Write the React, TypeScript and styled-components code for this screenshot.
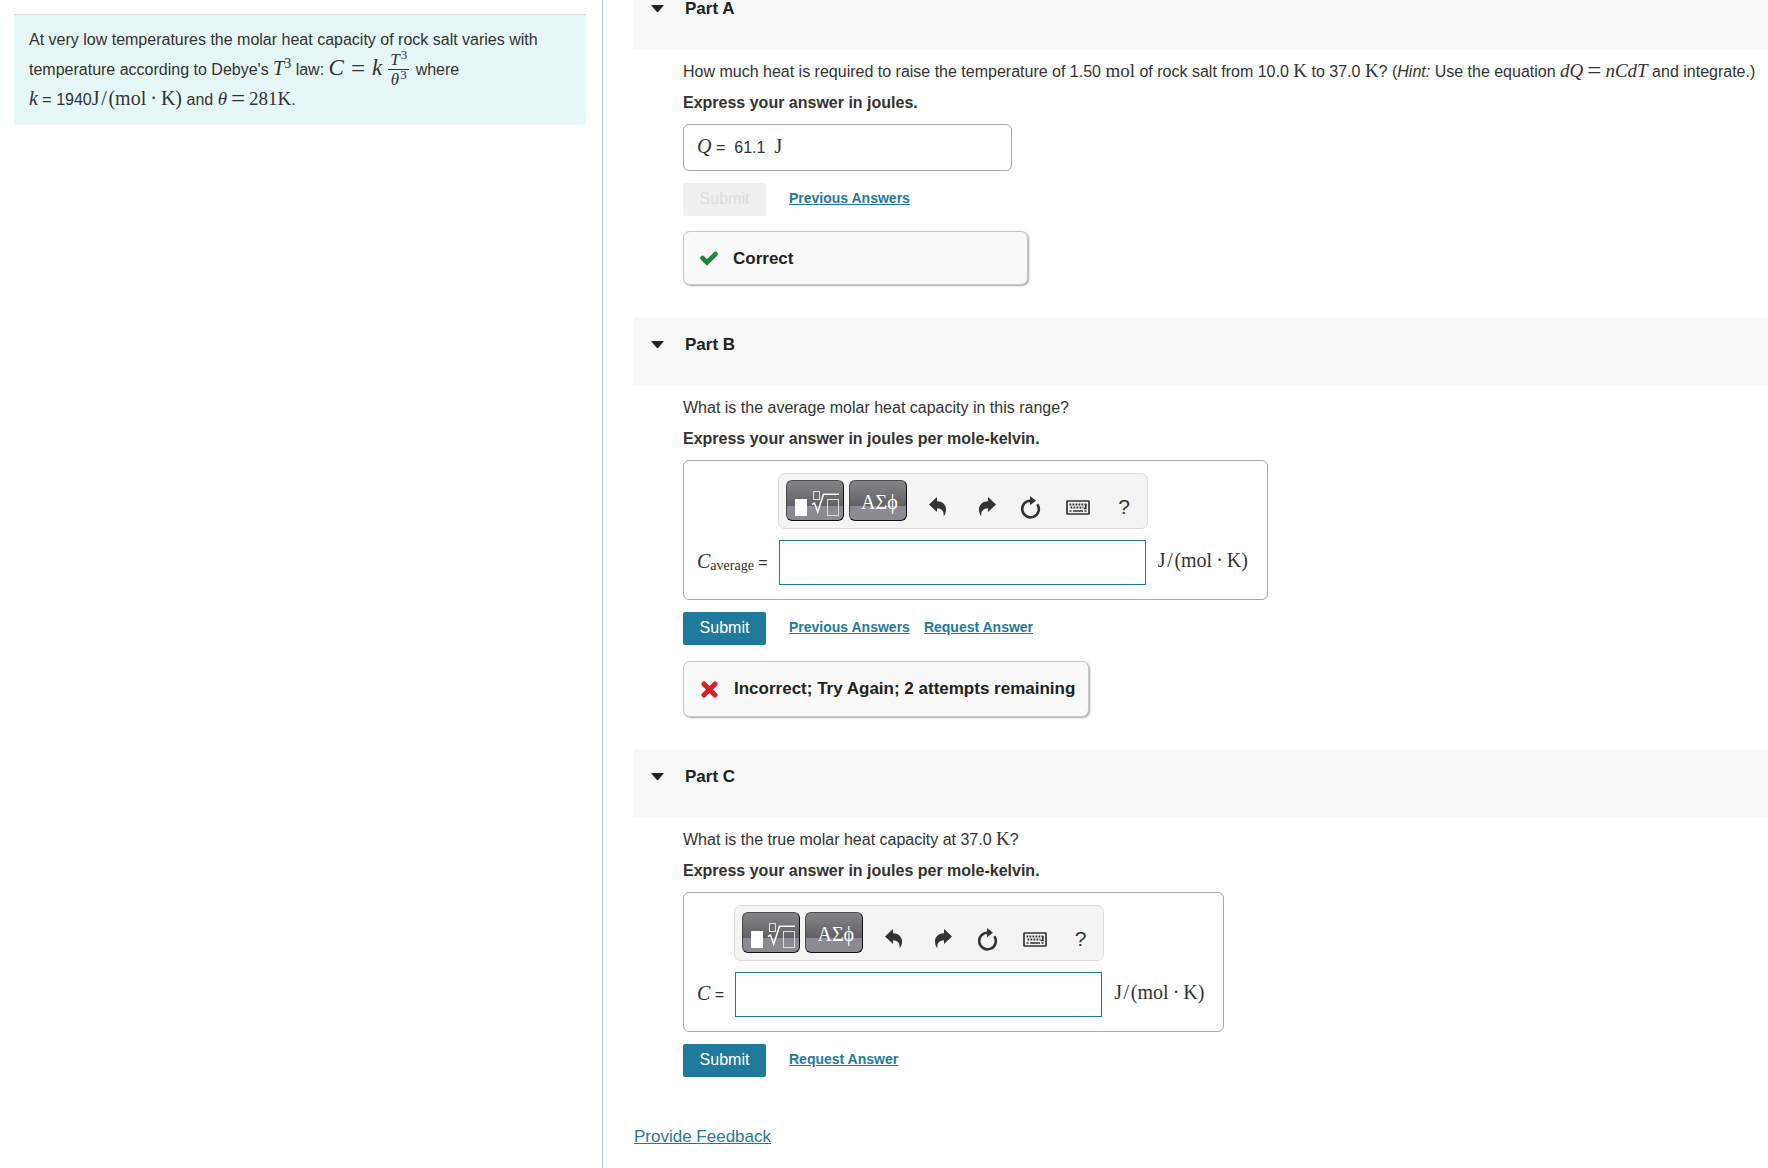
import type { ReactNode } from "react";
import styled, { createGlobalStyle } from "styled-components";

const sans = '"Liberation Sans", Arial, Helvetica, sans-serif';
const serif = '"Liberation Serif", "Times New Roman", serif';

const GlobalStyle = createGlobalStyle`
  *, *::before, *::after { box-sizing: border-box; }
  body {
    margin: 0;
    background: #fff;
    color: #333;
    font-family: ${sans};
    font-size: 16px;
    line-height: 24px;
  }
  button, input { font: inherit; color: inherit; }
  svg { flex-shrink: 0; }
`;

const Page = styled.div`
  display: flex;
  min-height: 100vh;
  overflow: hidden;
`;

const Sidebar = styled.aside`
  flex: 0 1 603px;
  padding: 14px 16px 14px 14px;
  border-right: 1px solid #b4c4d3;
`;

const Problem = styled.p`
  margin: 0;
  padding: 10px 15px;
  border-top: 1px solid #dcdcdc;
  background: #e6f7f7;
  line-height: 30px;
`;

const Main = styled.main`
  flex: 1 1 0;
  min-width: 0;
  margin-top: -19px;
  padding-left: 31px;
`;

const PartHeader = styled.header`
  height: 68px;
  padding: 16px 17px;
  background: #f9f9f9;
`;

const Toggle = styled.button`
  display: flex;
  align-items: center;
  gap: 21px;
  padding: 0;
  border: 0;
  background: none;
  color: #222;
  font-size: 17px;
  font-weight: bold;
`;

const PartBody = styled.div`
  padding: 11px 0 32px 49px;
`;

const Question = styled.p`
  margin: 0 0 7px;
`;

const Instruction = styled.p`
  margin: 0 0 9px;
  font-weight: bold;
`;

const Math = styled.span<{ $size?: number }>`
  font-family: ${serif};
  font-size: ${({ $size = 20 }) => $size}px;
  font-weight: normal;
  line-height: 1;
  white-space: nowrap;

  sup {
    font-size: 14px;
    line-height: 0;
    vertical-align: 7px;
  }
  sub {
    font-size: 14px;
    line-height: 0;
    vertical-align: -2px;
  }
`;

const Relation = styled.span<{ $gap?: number }>`
  margin: 0 ${({ $gap = 4 }) => $gap}px;
  font-size: 25px;
  line-height: 0;
  vertical-align: -2px;
`;

const Fraction = styled.span`
  display: inline-flex;
  flex-direction: column;
  align-items: center;
  margin: -12px 2px -12px 6px;
  font-size: 17px;
  line-height: 19px;
  vertical-align: middle;

  sup {
    margin-left: 1px;
    font-size: 13px;
    vertical-align: 6px;
  }
`;

const Numerator = styled.span`
  padding: 0 2px;
  border-bottom: 1px solid #333;
`;

const AnswerBox = styled.div`
  display: flex;
  align-items: baseline;
  gap: 9px;
  width: 329px;
  max-width: 100%;
  height: 47px;
  padding: 0 13px;
  border: 1px solid #a9a9a9;
  border-radius: 6px;
  line-height: 45px;
`;

const EntryBox = styled.div`
  display: inline-grid;
  grid-template-columns: auto auto auto;
  align-items: center;
  column-gap: 10px;
  row-gap: 11px;
  padding: 12px 19px 14px 13px;
  border: 1px solid #a9a9a9;
  border-radius: 6px;
  vertical-align: top;
`;

const Toolbar = styled.div`
  grid-column: 2;
  display: flex;
  height: 56px;
  padding: 6px 2px 6px 7px;
  border: 1px solid #dcdcdc;
  border-radius: 7px;
  background: #f4f4f4;
`;

const PaletteButton = styled.button<{ $inset: number }>`
  display: flex;
  align-items: flex-end;
  justify-content: flex-end;
  width: 58px;
  height: 41px;
  margin-right: 5px;
  padding: 0 ${({ $inset }) => $inset}px 4px 0;
  border: 1px solid #4a4a4c;
  border-right-color: #111;
  border-bottom-color: #111;
  border-radius: 6px;
  background: linear-gradient(#858587 0, #626264 63%, #8c8b95 64%, #8a8a92 100%);
  color: #fff;
  font-family: ${serif};
  font-size: 20px;
  line-height: 28px;
`;

const ToolButton = styled.button<{ $width: number }>`
  display: flex;
  align-items: center;
  justify-content: center;
  width: ${({ $width }) => $width}px;
  padding: 12px 0 0;
  border: 0;
  background: none;
  color: #333;
  font-size: 21px;
`;

const EntryLabel = styled.label`
  grid-column: 1;
  white-space: nowrap;
`;

const EntryField = styled.input`
  width: 367px;
  height: 45px;
  margin: 0 1px;
  padding: 0 8px;
  border: 1px solid #1f7a9c;
  background: #fff;
  outline: none;
`;

const EntryUnit = styled.span`
  padding-bottom: 2px;
`;

const Actions = styled.div`
  display: flex;
  align-items: center;
  gap: 14px;
  margin-top: 12px;
`;

const Submit = styled.button`
  width: 83px;
  height: 33px;
  margin-right: 9px;
  padding: 0 0 2px;
  border: 0;
  border-radius: 2px;
  background: #1f7a9c;
  color: #fff;

  &:disabled {
    background: #f0f0f0;
    color: #dedede;
  }
`;

const ActionLink = styled.a`
  padding-bottom: 4px;
  color: #1f7a9c;
  font-size: 14px;
  font-weight: bold;
`;

const Result = styled.div<{ $wide?: boolean }>`
  display: flex;
  align-items: center;
  gap: 15px;
  width: ${({ $wide }) => ($wide ? "406px" : "345px")};
  max-width: 100%;
  margin-top: ${({ $wide }) => ($wide ? "16px" : "15px")};
  padding: 15px 0 ${({ $wide }) => ($wide ? "15px" : "13px")} 16px;
  border: 1px solid #c6c6c6;
  border-radius: 7px;
  background: #f9f9f9;
  box-shadow: 1px 1px 2px #aaa;
  color: #222;
  font-size: 17px;
  font-weight: bold;
  white-space: nowrap;
`;

const FeedbackLink = styled.a`
  display: inline-block;
  margin-top: 16px;
  color: #1f7a9c;
  font-size: 17px;
`;

const TemplateIcon = () => (
  <svg width="44" height="29" viewBox="0 0 44 29" fill="none" stroke="#fff" aria-hidden="true">
    <rect x="0" y="12" width="12" height="17" fill="#fff" stroke="none" />
    <rect x="18.5" y="4.5" width="6" height="8" stroke="#ddd" />
    <path d="M17 17.500l2.500-1.500 3.200 9L28.500 7.300H44" strokeWidth="1.500" />
    <rect x="32.500" y="12.500" width="11" height="16" stroke="#ddd" />
  </svg>
);

const UndoIcon = () => (
  <svg width="18" height="20" viewBox="0 0 18 20" fill="currentColor" aria-hidden="true">
    <path d="M0 7.500L8 0v4.200c6.500.3 9 4.300 9 8.300 0 3-1 5.300-2.300 7 .3-4.800-1.200-7.800-6.700-8.200V15z" />
  </svg>
);

const RedoIcon = () => (
  <svg width="18" height="20" viewBox="0 0 18 20" fill="currentColor" aria-hidden="true">
    <path d="M18 7.500L10 0v4.200C3.500 4.500 1 8.500 1 12.500c0 3 1 5.300 2.300 7C3 14.700 4.500 11.700 10 11.300V15z" />
  </svg>
);

const ResetIcon = () => (
  <svg width="20" height="23" viewBox="0 0 20 23" fill="none" aria-hidden="true">
    <path d="M16.300 8.200A8.300 8.300 0 1 1 10 4.700" stroke="currentColor" strokeWidth="2.600" />
    <path d="M9 0l6 4.700L9 9.200z" fill="currentColor" />
  </svg>
);

const KeyboardIcon = () => (
  <svg width="24" height="15" viewBox="0 0 24 15" fill="none" stroke="currentColor" aria-hidden="true">
    <rect x="1" y="1" width="22" height="13" rx="0.500" strokeWidth="1.700" />
    <path d="M3.500 4.500h17M4.500 7.500h13" strokeWidth="1.800" strokeDasharray="1.800 1.200" />
    <path d="M3.500 11h2M7 11h10M18.500 11h2M19.800 4v4.500h-2" strokeWidth="1.700" />
  </svg>
);

const CaretIcon = () => (
  <svg width="13" height="8" viewBox="0 0 13 8" fill="currentColor" aria-hidden="true">
    <path d="M0 0h13L7.500 6.500q-1 1-2 0z" />
  </svg>
);

const CheckIcon = () => (
  <svg width="18" height="16" viewBox="0 0 18 16" fill="none" aria-hidden="true">
    <path
      d="M2.500 7l4.500 4.500L15.500 3"
      stroke="#1e8540"
      strokeWidth="4.600"
      strokeLinecap="round"
    />
  </svg>
);

const CrossIcon = () => (
  <svg width="19" height="17" viewBox="0 0 19 17" fill="none" aria-hidden="true">
    <path d="M4 3l11 11m0-11l-11 11" stroke="#d8202a" strokeWidth="5" strokeLinecap="round" />
  </svg>
);

function Part({ name, children }: { name: string; children: ReactNode }) {
  return (
    <section>
      <PartHeader>
        <Toggle type="button" aria-expanded="true">
          <CaretIcon />
          {name}
        </Toggle>
      </PartHeader>
      <PartBody>{children}</PartBody>
    </section>
  );
}

const Unit = () => <Math>J{"\u200a"}/{"\u200a"}(mol{"\u2009"}·{"\u2009"}K)</Math>;

function MathEntry({ id, label }: { id: string; label: ReactNode }) {
  return (
    <EntryBox>
      <Toolbar role="toolbar">
        <PaletteButton type="button" $inset={4} aria-label="Templates">
          <TemplateIcon />
        </PaletteButton>
        <PaletteButton type="button" $inset={8}>
          ΑΣϕ
        </PaletteButton>
        <ToolButton type="button" $width={52} aria-label="Undo">
          <UndoIcon />
        </ToolButton>
        <ToolButton type="button" $width={46} aria-label="Redo">
          <RedoIcon />
        </ToolButton>
        <ToolButton type="button" $width={43} aria-label="Reset">
          <ResetIcon />
        </ToolButton>
        <ToolButton type="button" $width={51} aria-label="Keyboard shortcuts">
          <KeyboardIcon />
        </ToolButton>
        <ToolButton type="button" $width={41}>
          ?
        </ToolButton>
      </Toolbar>
      <EntryLabel htmlFor={id}>
        <Math>{label}</Math> =
      </EntryLabel>
      <EntryField id={id} type="text" />
      <EntryUnit>
        <Unit />
      </EntryUnit>
    </EntryBox>
  );
}

export default function App() {
  return (
    <>
      <GlobalStyle />
      <Page>
        <Sidebar>
          <Problem>
            At very low temperatures the molar heat capacity of rock salt varies with temperature
            according to Debye's{" "}
            <Math>
              <i>T</i>
              <sup>3</sup>
            </Math>{" "}
            law:{" "}
            <Math $size={23}>
              <i>C</i>
              <Relation $gap={7}>=</Relation>
              <i>k</i>
              <Fraction>
                <Numerator>
                  <i>T</i>
                  <sup>3</sup>
                </Numerator>
                <span>
                  <i>θ</i>
                  <sup>3</sup>
                </span>
              </Fraction>
            </Math>{" "}
            where
            <br />
            <Math>
              <i>k</i>
            </Math>{" "}
            = 1940
            <Unit /> and{" "}
            <Math $size={19}>
              <i>θ</i>
              <Relation>=</Relation>
              281K
            </Math>
            .
          </Problem>
        </Sidebar>
        <Main>
          <Part name="Part A">
            <Question>
              How much heat is required to raise the temperature of 1.50 <Math $size={19}>mol</Math>{" "}
              of rock salt from 10.0 <Math $size={19}>K</Math> to 37.0 <Math $size={19}>K</Math>? (
              <i>Hint:</i> Use the equation{" "}
              <Math $size={19}>
                <i>dQ</i>
                <Relation>=</Relation>
                <i>nCdT</i>
              </Math>{" "}
              and integrate.)
            </Question>
            <Instruction>Express your answer in joules.</Instruction>
            <AnswerBox>
              <span>
                <Math>
                  <i>Q</i>
                </Math>{" "}
                =
              </span>
              <span>61.1</span>
              <Math>J</Math>
            </AnswerBox>
            <Actions>
              <Submit type="submit" disabled>
                Submit
              </Submit>
              <ActionLink href="#previous-a">Previous Answers</ActionLink>
            </Actions>
            <Result>
              <CheckIcon />
              Correct
            </Result>
          </Part>
          <Part name="Part B">
            <Question>What is the average molar heat capacity in this range?</Question>
            <Instruction>Express your answer in joules per mole-kelvin.</Instruction>
            <MathEntry
              id="average-capacity"
              label={
                <>
                  <i>C</i>
                  <sub>average</sub>
                </>
              }
            />
            <Actions>
              <Submit type="submit">Submit</Submit>
              <ActionLink href="#previous-b">Previous Answers</ActionLink>
              <ActionLink href="#request-b">Request Answer</ActionLink>
            </Actions>
            <Result $wide>
              <CrossIcon />
              Incorrect; Try Again; 2 attempts remaining
            </Result>
          </Part>
          <Part name="Part C">
            <Question>
              What is the true molar heat capacity at 37.0 <Math $size={19}>K</Math>?
            </Question>
            <Instruction>Express your answer in joules per mole-kelvin.</Instruction>
            <MathEntry id="true-capacity" label={<i>C</i>} />
            <Actions>
              <Submit type="submit">Submit</Submit>
              <ActionLink href="#request-c">Request Answer</ActionLink>
            </Actions>
          </Part>
          <FeedbackLink href="#feedback">Provide Feedback</FeedbackLink>
        </Main>
      </Page>
    </>
  );
}
